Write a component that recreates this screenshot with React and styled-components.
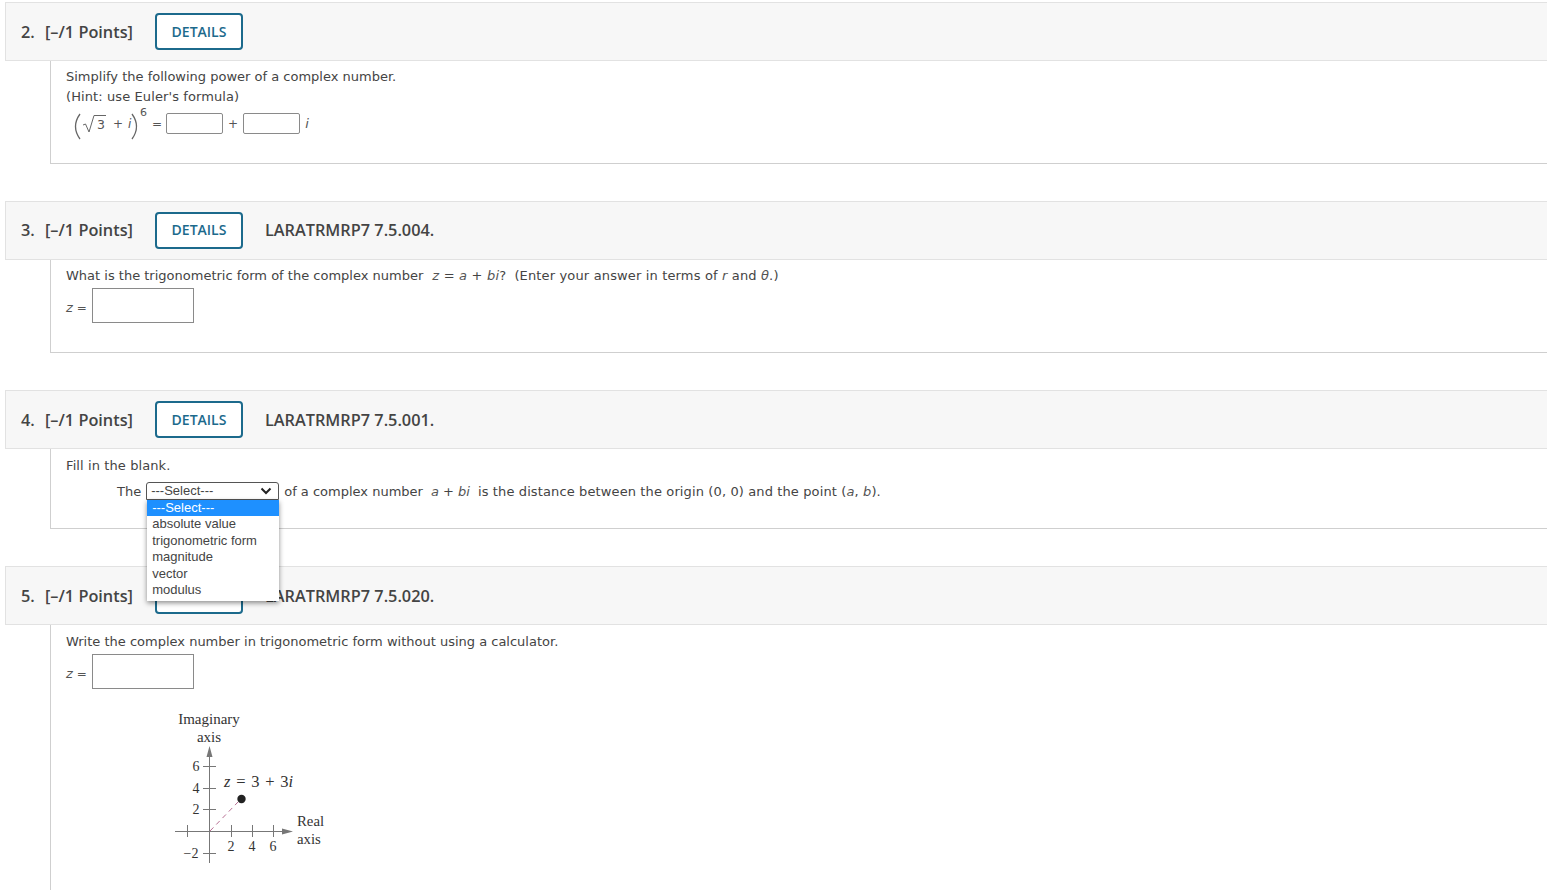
import React from "react";
import styled, { createGlobalStyle } from "styled-components";

const Global = createGlobalStyle`
  html, body { margin: 0; padding: 0; background: #fff; overflow: hidden; }
  body { font-family: "DejaVu Sans", Verdana, sans-serif; color: #444; }
`;
const Page = styled.main`
  height: 890px;
  overflow: hidden;
  padding: 2px 0 0 5px;
  box-sizing: border-box;
`;
const Question = styled.section`
  margin-bottom: 37px;
`;
const Header = styled.header`
  display: flex;
  align-items: center;
  height: 59px;
  box-sizing: border-box;
  padding-left: 15px;
  background: #f7f7f7;
  border: 1px solid #e2e2e2;
  border-right: 0;
  font: 600 16.3px/20px "Open Sans", sans-serif;
  color: #444;
`;
const Num = styled.span`
  width: 24px;
  margin-top: ${(p) => (p.$up ? -2 : 0)}px;
`;
const Points = styled.span`
  width: 110px;
  margin-top: ${(p) => (p.$up ? -2 : 0)}px;
`;
const Details = styled.button`
  width: 88px;
  height: 37px;
  box-sizing: border-box;
  padding: 0 0 ${(p) => (p.$up ? 2 : 0)}px;
  background: #fff;
  border: 2px solid #1c6a8c;
  border-radius: 4px;
  color: #1c6a8c;
  font: 600 14px "Open Sans", sans-serif;
`;
const Code = styled.span`
  margin-left: 22px;
  margin-top: ${(p) => (p.$up ? -2 : 0)}px;
`;
const Body = styled.div`
  margin-left: 45px;
  padding: ${(p) => p.$pt}px 0 0 15px;
  box-sizing: border-box;
  min-height: ${(p) => p.$h}px;
  border-left: 1px solid #cfcfcf;
  border-bottom: ${(p) => (p.$open ? 0 : "1px solid #cfcfcf")};
  font-size: 13px;
  line-height: 20px;
  color: #444;
  white-space: nowrap;
`;
const Line = styled.div`
  height: 20px;
  letter-spacing: ${(p) => p.$ls || 0}px;
`;
const Wide = styled.span`
  letter-spacing: ${(p) => p.$ls}px;
`;
const Gap = styled.span`
  display: inline-block;
  width: ${(p) => p.$w}px;
`;
const MathRow = styled.div`
  display: flex;
  align-items: center;
  height: 33px;
  padding-left: 6px;
  font-size: 12px;
  color: #555;
`;
const V = styled.i`
  font-size: 13px;
  color: #555;
`;
const Eq = styled.span`
  margin: 0 ${(p) => p.$m || 5}px;
`;
const SmallInput = styled.input`
  width: 57px;
  height: 21px;
  box-sizing: border-box;
  padding: 0;
  background: #fff;
  border: 1px solid #8a8a8a;
  border-radius: 2px;
`;
const AnswerRow = styled.div`
  display: flex;
  align-items: center;
  margin-top: 2px;
  font-size: 12px;
  color: #555;
`;
const AnswerLabel = styled.span`
  padding-top: 4px;
`;
const BigInput = styled.input`
  width: 102px;
  height: 35px;
  margin-left: 5px;
  box-sizing: border-box;
  padding: 0;
  background: #fff;
  border: 1px solid #8a8a8a;
`;
const FillRow = styled.div`
  display: flex;
  align-items: center;
  height: 20px;
  margin-top: 6px;
  padding-left: 51px;
`;
const SelectWrap = styled.div`
  position: relative;
  width: 133px;
  height: 18px;
  margin: -2px 5px 0;
`;
const SelectBox = styled.div`
  display: flex;
  align-items: center;
  justify-content: space-between;
  height: 18px;
  box-sizing: border-box;
  padding: 0 6px 0 4px;
  border: 1px solid #555;
  border-radius: 3px 3px 0 0;
  background: #fff;
  font: 13px/16px "Liberation Sans", sans-serif;
  color: #444;
`;
const Menu = styled.ul`
  position: absolute;
  z-index: 5;
  left: 1px;
  top: 17.5px;
  width: 132px;
  margin: 0;
  padding: 0 0 2px;
  list-style: none;
  background: #fff;
  box-shadow: 0 2px 5px rgba(0, 0, 0, 0.45);
  font: 13px/16.6px "Liberation Sans", sans-serif;
  color: #444;
`;
const Option = styled.li`
  padding-left: 5px;
  height: 16.6px;
  background: ${(p) => (p.$on ? "#1e90ff" : "transparent")};
  color: ${(p) => (p.$on ? "#fff" : "inherit")};
`;
const Figure = styled.svg`
  display: block;
  margin: 16px 0 0 104px;
`;

function Head({ n, code, up }) {
  return (
    <Header>
      <Num $up={up}>{n}.</Num>
      <Points $up={up}>[–/1 Points]</Points>
      <Details $up={up}>DETAILS</Details>
      {code && <Code $up={up}>{code}</Code>}
    </Header>
  );
}

function RootExpr() {
  return (
    <svg width="76" height="33" viewBox="0 0 76 33" style={{ flex: "none" }}>
      <path d="M8 7Q-1 19.5 8 32" fill="none" stroke="#666" strokeWidth="1.3" />
      <path d="M11 18l2.5-1 3.5 8 5-16.5h12" fill="none" stroke="#666" strokeWidth="1" />
      <text x="25" y="22" fontSize="12.5" fill="#555" fontFamily="DejaVu Sans">3</text>
      <text x="41" y="21" fontSize="12" fill="#555" fontFamily="DejaVu Sans">+</text>
      <text x="56" y="21" fontSize="12" fontStyle="italic" fill="#555" fontFamily="DejaVu Sans">i</text>
      <path d="M60 7Q69 19.5 60 32" fill="none" stroke="#666" strokeWidth="1.3" />
      <text x="68" y="9" fontSize="11" fill="#555" fontFamily="DejaVu Sans">6</text>
    </svg>
  );
}

function Plot() {
  const T = ({ x, y, s = 14, a = "middle", w, children }) => (
    <text x={x} y={y} fontSize={s} textAnchor={a} wordSpacing={w} fill="#333" fontFamily="Liberation Serif, serif">
      {children}
    </text>
  );
  return (
    <Figure width="170" height="165" viewBox="170 705 170 165">
      <T x={209} y={724} s={15}>Imaginary</T>
      <T x={209} y={742} s={15}>axis</T>
      <g stroke="#777" strokeWidth="1" fill="none">
        <path d="M209.5 752V863M175 831.5H286" />
        <path d="M203 766.5H216M203 788.5H216M203 809.5H216M203 853.5H216" />
        <path d="M187.5 825V837M231.5 825V837M252.5 825V837M273.5 825V837" />
      </g>
      <path d="M209.5 746l-3 11h6zM293 831.5l-11-3v6z" fill="#777" />
      <path d="M210 831L238 802" stroke="#b86f93" strokeWidth="1" strokeDasharray="5 4" />
      <circle cx="241.5" cy="799" r="4.2" fill="#222" />
      <T x={196} y={771}>6</T>
      <T x={196} y={793}>4</T>
      <T x={196} y={814}>2</T>
      <T x={191} y={858}>−2</T>
      <T x={231} y={851}>2</T>
      <T x={252} y={851}>4</T>
      <T x={273} y={851}>6</T>
      <T x={224} y={787} s={16.5} a="start" w={1.6}><tspan fontStyle="italic">z</tspan> = 3 + 3<tspan fontStyle="italic">i</tspan></T>
      <T x={297} y={826} s={14.8} a="start">Real</T>
      <T x={297} y={844} s={14.8} a="start">axis</T>
    </Figure>
  );
}

const options = ["---Select---", "absolute value", "trigonometric form", "magnitude", "vector", "modulus"];

export default function App() {
  return (
    <Page>
      <Global />
      <Question>
        <Head n={2} />
        <Body $h={103} $pt={6}>
          <Line>Simplify the following power of a complex number.</Line>
          <Line $ls={0.1}>(Hint: use Euler's formula)</Line>
          <MathRow>
            <RootExpr />
            <Eq $m={4}>=</Eq>
            <SmallInput readOnly />
            <Eq $m={5}>+</Eq>
            <SmallInput readOnly />
            <Eq $m={5}><V>i</V></Eq>
          </MathRow>
        </Body>
      </Question>
      <Question>
        <Head n={3} code="LARATRMRP7 7.5.004." up />
        <Body $h={93} $pt={6}>
          <Line>
            What is the trigonometric form of the complex number<Gap $w={9} /><Wide $ls={0.2}><V>z</V> = <V>a</V> + <V>bi</V>?</Wide><Gap $w={8} /><Wide $ls={0.15}>(Enter your answer in terms of <V>r</V> and <V>θ</V>.)</Wide>
          </Line>
          <AnswerRow>
            <AnswerLabel><V>z</V>&nbsp;=</AnswerLabel>
            <BigInput readOnly />
          </AnswerRow>
        </Body>
      </Question>
      <Question>
        <Head n={4} code="LARATRMRP7 7.5.001." />
        <Body $h={80} $pt={7}>
          <Line $ls={0.1}>Fill in the blank.</Line>
          <FillRow>
            The
            <SelectWrap>
              <SelectBox>
                ---Select---
                <svg width="12" height="8" viewBox="0 0 12 8">
                  <path d="M1.5 1.5L6 6l4.5-4.5" fill="none" stroke="#222" strokeWidth="2" />
                </svg>
              </SelectBox>
              <Menu>
                {options.map((o, i) => (
                  <Option key={o} $on={i === 0}>{o}</Option>
                ))}
              </Menu>
            </SelectWrap>
            <span>
              of a complex number<Gap $w={8} /><V>a</V> + <V>bi</V><Gap $w={8} /><Wide $ls={0.12}>is the distance between the origin (0, 0) and the point (<V>a</V>, <V>b</V>).</Wide>
            </span>
          </FillRow>
        </Body>
      </Question>
      <Question>
        <Head n={5} code="LARATRMRP7 7.5.020." />
        <Body $h={300} $pt={7} $open>
          <Line>Write the complex number in trigonometric form without using a calculator.</Line>
          <AnswerRow>
            <AnswerLabel><V>z</V>&nbsp;=</AnswerLabel>
            <BigInput readOnly />
          </AnswerRow>
          <Plot />
        </Body>
      </Question>
    </Page>
  );
}
